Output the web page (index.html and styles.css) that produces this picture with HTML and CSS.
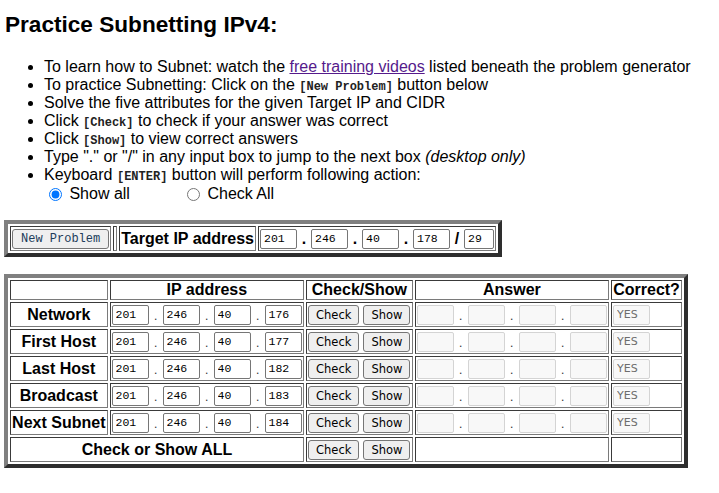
FILE: index.html
```html
<!DOCTYPE html>
<html>
<head>
<meta charset="utf-8">
<title>Practice Subnetting IPv4</title>
<link rel="stylesheet" href="styles.css">
</head>
<body>
<h2 class="title">Practice Subnetting IPv4:</h2>
<ul class="steps">
<li class="step">To learn how to Subnet: watch the <a href="#" class="link">free training videos</a> listed beneath the problem generator</li>
<li class="step">To practice Subnetting: Click on the <code class="kbd">[New Problem]</code> button below</li>
<li class="step">Solve the five attributes for the given Target IP and CIDR</li>
<li class="step">Click <code class="kbd">[Check]</code> to check if your answer was correct</li>
<li class="step">Click <code class="kbd">[Show]</code> to view correct answers</li>
<li class="step">Type "." or "/" in any input box to jump to the next box <i>(desktop only)</i></li>
<li class="step">Keyboard <code class="kbd">[ENTER]</code> button will perform following action:
<div class="modes"><label class="mode mode-first"><input class="radio" type="radio" name="mode" checked> Show all</label><label class="mode"><input class="radio" type="radio" name="mode"> Check All</label></div>
</li>
</ul>

<table class="frame target">
<tr>
<td class="cell"><button class="newbtn">New Problem</button></td>
<td class="cell blank"></td>
<td class="cell tlabel">Target IP address</td>
<td class="cell"><div class="ipgroup big"><input class="oct" value="201"><span class="sep">.</span><input class="oct" value="246"><span class="sep">.</span><input class="oct" value="40"><span class="sep">.</span><input class="oct" value="178"><span class="sep">/</span><input class="oct cidr" value="29"></div></td>
</tr>
</table>

<table class="frame grid">
<tr>
<td class="cell head"></td>
<td class="cell head">IP address</td>
<td class="cell head">Check/Show</td>
<td class="cell head">Answer</td>
<td class="cell head">Correct?</td>
</tr>
<tr>
<td class="cell label">Network</td>
<td class="cell"><div class="ipgroup"><input class="oct" value="201"><span class="sep">.</span><input class="oct" value="246"><span class="sep">.</span><input class="oct" value="40"><span class="sep">.</span><input class="oct" value="176"></div></td>
<td class="cell"><div class="btns"><button class="btn">Check</button><button class="btn">Show</button></div></td>
<td class="cell"><div class="ipgroup"><input class="oct ans" readonly><span class="sep">.</span><input class="oct ans" readonly><span class="sep">.</span><input class="oct ans" readonly><span class="sep">.</span><input class="oct ans" readonly></div></td>
<td class="cell"><input class="yes" value="YES" readonly></td>
</tr>
<tr>
<td class="cell label">First Host</td>
<td class="cell"><div class="ipgroup"><input class="oct" value="201"><span class="sep">.</span><input class="oct" value="246"><span class="sep">.</span><input class="oct" value="40"><span class="sep">.</span><input class="oct" value="177"></div></td>
<td class="cell"><div class="btns"><button class="btn">Check</button><button class="btn">Show</button></div></td>
<td class="cell"><div class="ipgroup"><input class="oct ans" readonly><span class="sep">.</span><input class="oct ans" readonly><span class="sep">.</span><input class="oct ans" readonly><span class="sep">.</span><input class="oct ans" readonly></div></td>
<td class="cell"><input class="yes" value="YES" readonly></td>
</tr>
<tr>
<td class="cell label">Last Host</td>
<td class="cell"><div class="ipgroup"><input class="oct" value="201"><span class="sep">.</span><input class="oct" value="246"><span class="sep">.</span><input class="oct" value="40"><span class="sep">.</span><input class="oct" value="182"></div></td>
<td class="cell"><div class="btns"><button class="btn">Check</button><button class="btn">Show</button></div></td>
<td class="cell"><div class="ipgroup"><input class="oct ans" readonly><span class="sep">.</span><input class="oct ans" readonly><span class="sep">.</span><input class="oct ans" readonly><span class="sep">.</span><input class="oct ans" readonly></div></td>
<td class="cell"><input class="yes" value="YES" readonly></td>
</tr>
<tr>
<td class="cell label">Broadcast</td>
<td class="cell"><div class="ipgroup"><input class="oct" value="201"><span class="sep">.</span><input class="oct" value="246"><span class="sep">.</span><input class="oct" value="40"><span class="sep">.</span><input class="oct" value="183"></div></td>
<td class="cell"><div class="btns"><button class="btn">Check</button><button class="btn">Show</button></div></td>
<td class="cell"><div class="ipgroup"><input class="oct ans" readonly><span class="sep">.</span><input class="oct ans" readonly><span class="sep">.</span><input class="oct ans" readonly><span class="sep">.</span><input class="oct ans" readonly></div></td>
<td class="cell"><input class="yes" value="YES" readonly></td>
</tr>
<tr>
<td class="cell label">Next Subnet</td>
<td class="cell"><div class="ipgroup"><input class="oct" value="201"><span class="sep">.</span><input class="oct" value="246"><span class="sep">.</span><input class="oct" value="40"><span class="sep">.</span><input class="oct" value="184"></div></td>
<td class="cell"><div class="btns"><button class="btn">Check</button><button class="btn">Show</button></div></td>
<td class="cell"><div class="ipgroup"><input class="oct ans" readonly><span class="sep">.</span><input class="oct ans" readonly><span class="sep">.</span><input class="oct ans" readonly><span class="sep">.</span><input class="oct ans" readonly></div></td>
<td class="cell"><input class="yes" value="YES" readonly></td>
</tr>
<tr>
<td class="cell label" colspan="2">Check or Show ALL</td>
<td class="cell"><div class="btns"><button class="btn">Check</button><button class="btn">Show</button></div></td>
<td class="cell"></td>
<td class="cell"></td>
</tr>
</table>
</body>
</html>
```

FILE: styles.css
```css
html, body {
  background: #ffffff;
}

body {
  margin: 0 4px;
  font-family: "Liberation Sans", Arial, sans-serif;
  font-size: 16px;
  color: #000000;
}

.title {
  margin: 11px 0 20px 1px;
  font-size: 22.6px;
  font-weight: bold;
  line-height: 27px;
}

.steps {
  margin: 0;
  padding-left: 40px;
}

.step {
  line-height: 18px;
}

.step::marker {
  line-height: 18px;
  font-size: 16px;
}

.link {
  color: #551a8b;
  text-decoration: underline;
}

.kbd {
  font-family: "Liberation Mono", "DejaVu Sans Mono", monospace;
  font-size: 12px;
  font-weight: bold;
  line-height: 10px;
  color: #222222;
}

.modes {
  display: flex;
  align-items: center;
  height: 20px;
}

.mode {
  display: flex;
  align-items: center;
  white-space: pre;
}

.mode-first {
  width: 138px;
}

.radio {
  width: 13px;
  height: 13px;
  margin: 0 3px 0 5px;
  accent-color: #0075ff;
}

.frame {
  border-width: 4px;
  border-style: solid;
  border-color: #808080 #2e2e2e #2e2e2e #808080;
  border-spacing: 2px;
}

.target {
  margin-top: 16px;
}

.grid {
  margin-top: 17px;
  width: 684px;
}

.cell {
  border: 1px solid;
  border-color: #3a3a3a #7a7a7a #7a7a7a #3a3a3a;
  padding: 1px;
  vertical-align: middle;
}

.blank {
  width: 0;
  padding: 0 1px;
}

.tlabel {
  font-weight: bold;
  white-space: nowrap;
}

.head {
  font-weight: bold;
  text-align: center;
  line-height: 17px;
  padding-top: 0;
}

.label {
  font-weight: bold;
  text-align: center;
  white-space: nowrap;
}

.ipgroup {
  display: flex;
  align-items: center;
  height: 21px;
}

.sep {
  width: 14px;
  align-self: flex-end;
  text-align: center;
  font-size: 12px;
  line-height: 17px;
  color: #333333;
}

.big .sep {
  font-size: 16px;
  font-weight: bold;
  line-height: 21px;
  color: #000000;
}

.oct {
  box-sizing: border-box;
  width: 37px;
  height: 20px;
  margin: 0;
  padding: 0 3px;
  border: 1px solid #767676;
  border-radius: 2px;
  background: #ffffff;
  font-family: "Liberation Mono", "DejaVu Sans Mono", monospace;
  font-size: 11.5px;
  color: #000000;
}

.cidr {
  width: 30px;
}

.ans {
  background: #f8f8f8;
  border-color: #d4d4d4;
}

.yes {
  box-sizing: border-box;
  display: block;
  width: 37px;
  height: 20px;
  margin: 0;
  padding: 0 3px;
  border: 1px solid #d4d4d4;
  border-radius: 2px;
  background: #f8f8f8;
  font-family: "DejaVu Sans", Verdana, sans-serif;
  font-size: 11px;
  color: #6d6d6d;
}

.btns {
  display: flex;
  align-items: center;
  gap: 4px;
  height: 21px;
}

.btn {
  box-sizing: border-box;
  height: 20px;
  margin: 0;
  padding: 0 7px;
  border: 1px solid #767676;
  border-radius: 3px;
  background: #efefef;
  font-family: "DejaVu Sans", Verdana, sans-serif;
  font-size: 11.5px;
  color: #000000;
}

.newbtn {
  box-sizing: border-box;
  display: block;
  height: 20px;
  margin: 0;
  padding: 0 8px;
  border: 1px solid #767676;
  border-radius: 3px;
  background: #efefef;
  font-family: "Liberation Mono", "DejaVu Sans Mono", monospace;
  font-size: 12px;
  color: #203c5a;
}
```
